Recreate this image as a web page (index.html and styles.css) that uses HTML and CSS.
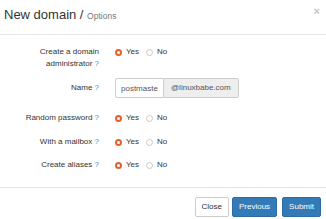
FILE: index.html
```html
<!DOCTYPE html>
<html>
<head>
<meta charset="utf-8">
<link rel="stylesheet" href="styles.css">
</head>
<body>
<div class="modal">
  <div class="modal-header">
    <h4 class="title">New domain / <small>Options</small></h4>
    <button class="close" type="button">×</button>
  </div>
  <form class="modal-body">
    <div class="row row-admin">
      <label class="lbl"><span class="line">Create a domain</span><br><span class="line">administrator</span> <span class="help">?</span></label>
      <div class="ctrl">
        <label class="opt"><input type="radio" name="admin" checked> Yes</label>
        <label class="opt"><input type="radio" name="admin"> No</label>
      </div>
    </div>
    <div class="row row-name">
      <label class="lbl">Name <span class="help">?</span></label>
      <div class="ctrl">
        <div class="input-group">
          <input class="field" type="text" value="postmaster">
          <span class="addon">@linuxbabe.com</span>
        </div>
      </div>
    </div>
    <div class="row row-pass">
      <label class="lbl">Random password <span class="help">?</span></label>
      <div class="ctrl">
        <label class="opt"><input type="radio" name="pass" checked> Yes</label>
        <label class="opt"><input type="radio" name="pass"> No</label>
      </div>
    </div>
    <div class="row row-mail">
      <label class="lbl">With a mailbox <span class="help">?</span></label>
      <div class="ctrl">
        <label class="opt"><input type="radio" name="mail" checked> Yes</label>
        <label class="opt"><input type="radio" name="mail"> No</label>
      </div>
    </div>
    <div class="row row-alias">
      <label class="lbl">Create aliases <span class="help">?</span></label>
      <div class="ctrl">
        <label class="opt"><input type="radio" name="alias" checked> Yes</label>
        <label class="opt"><input type="radio" name="alias"> No</label>
      </div>
    </div>
  </form>
  <div class="modal-footer">
    <button class="btn btn-default btn-close" type="button">Close</button>
    <button class="btn btn-primary btn-prev" type="button">Previous</button>
    <button class="btn btn-primary" type="button">Submit</button>
  </div>
</div>
</body>
</html>
```

FILE: styles.css
```css
html, body {
  margin: 0;
  padding: 0;
  background: #fff;
}
body {
  font-family: "Liberation Sans", Arial, sans-serif;
  color: #333;
  width: 326px;
  height: 219px;
  overflow: hidden;
}
.modal {
  width: 326px;
}
.modal-header {
  display: flex;
  justify-content: space-between;
  align-items: flex-start;
  padding: 7px 6px 10px 4px;
  border-bottom: 1px solid #e5e5e5;
}
.title {
  margin: 0;
  font-size: 13px;
  line-height: 15px;
  font-weight: normal;
  color: #333;
}
.title small {
  font-size: 8.5px;
  color: #777;
}
.close {
  margin: -1px 0 0 0;
  padding: 0;
  border: 0;
  background: none;
  font-family: "Liberation Sans", Arial, sans-serif;
  font-size: 11px;
  line-height: 11px;
  font-weight: bold;
  color: #c4c4c4;
}
.modal-body {
  margin: 0;
  padding: 11px 0 16px 0;
}
.row {
  display: grid;
  grid-template-columns: 99px 1fr;
  column-gap: 16px;
  font-size: 8px;
  line-height: 12px;
}
.lbl {
  padding-left: 14px;
  text-align: right;
  color: #333;
}
.help {
  color: #4a90c9;
}
.ctrl {
  display: flex;
  align-items: flex-start;
}
.opt {
  display: inline-flex;
  align-items: center;
  height: 12px;
  color: #333;
  margin-right: 7px;
}
.opt input {
  -webkit-appearance: none;
  appearance: none;
  box-sizing: border-box;
  width: 7px;
  height: 7px;
  margin: 0 4px 0 0;
  border: 1px solid #c8c8c8;
  border-radius: 50%;
  background: #fff;
}
.opt input:checked {
  border: 2.5px solid #e2622f;
  background: #fff;
}
.row-admin {
  margin-bottom: 8px;
}
.row-name {
  margin-bottom: 14px;
}
.row-name .lbl {
  line-height: 20px;
}
.row-pass {
  margin-bottom: 12px;
}
.row-mail {
  margin-bottom: 11px;
}
.input-group {
  display: flex;
  height: 20px;
}
.field {
  box-sizing: border-box;
  width: 49px;
  height: 20px;
  margin: 0;
  padding: 0 5px;
  border: 1px solid #ccc;
  border-radius: 2px 0 0 2px;
  font-family: "Liberation Sans", Arial, sans-serif;
  font-size: 8px;
  color: #555;
  outline: none;
}
.addon {
  box-sizing: border-box;
  display: flex;
  align-items: center;
  height: 20px;
  padding: 0 7px;
  border: 1px solid #ccc;
  border-left: 0;
  border-radius: 0 2px 2px 0;
  background: #eee;
  color: #555;
  font-size: 8px;
}
.modal-footer {
  display: flex;
  justify-content: flex-end;
  padding: 9px 5px 0 0;
  border-top: 1px solid #e5e5e5;
}
.btn {
  margin: 0;
  padding: 4px 6px;
  border: 1px solid transparent;
  border-radius: 2px;
  font-family: "Liberation Sans", Arial, sans-serif;
  font-size: 8px;
  line-height: 10px;
}
.btn-close {
  margin-right: 3px;
}
.btn-prev {
  margin-right: 5px;
}
.btn-default {
  background: #fff;
  border-color: #ccc;
  color: #333;
}
.btn-primary {
  background: #337ab7;
  border-color: #2e6da4;
  color: #fff;
}
```
